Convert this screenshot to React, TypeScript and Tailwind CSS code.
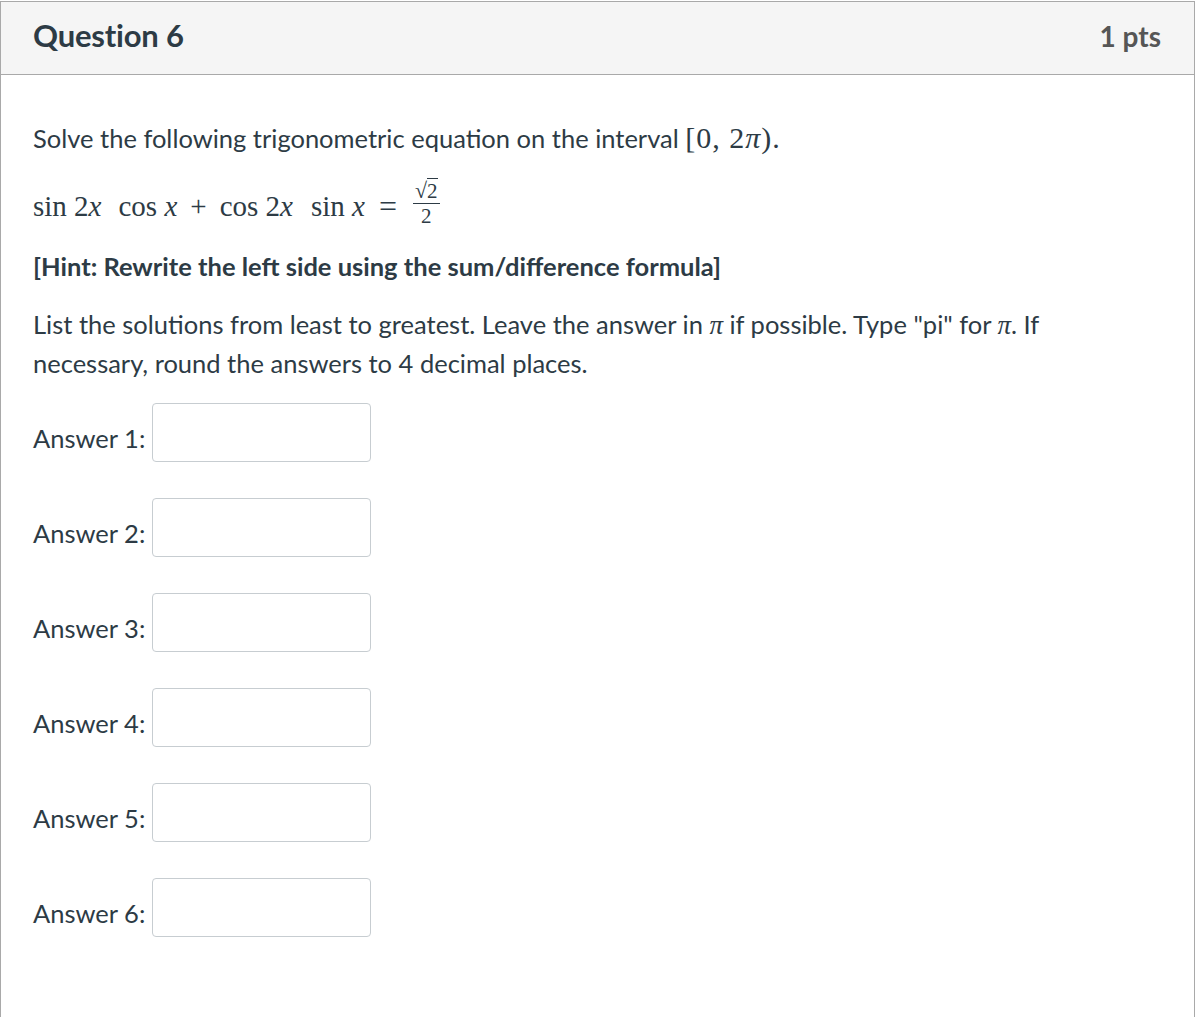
import React from 'react';

const answers = [1, 2, 3, 4, 5, 6];

const MathSerif: React.FC<{ children: React.ReactNode; className?: string }> = ({ children, className }) => (
  <span className={`font-['Liberation_Serif','DejaVu_Serif',serif] ${className ?? ''}`}>{children}</span>
);

const V: React.FC<{ children: React.ReactNode }> = ({ children }) => <i className="italic">{children}</i>;

const App: React.FC = () => {
  return (
    <div className="min-h-[1017px] bg-white pt-px font-['Lato',sans-serif] text-[#2d3b45]">
      <div className="w-[1195px] min-h-[1100px] border border-[#a9a9a9]">
        <header className="flex items-center justify-between h-[73px] bg-[#f5f5f5] border-b border-[#a9a9a9] pl-[32px] pr-[33px]">
          <h2 className="text-[31px] font-bold leading-none tracking-[-0.2px] pb-[5px]">Question 6</h2>
          <span className="text-[28px] font-bold text-[#565656] leading-none pb-[4px]">1 pts</span>
        </header>

        <div className="pl-[32px] pt-[44px] text-[25.5px] leading-[38px]">
          <p>
            Solve the following trigonometric equation on the interval{' '}
            <MathSerif className="text-[30px] tracking-[1px]">
              [0, 2<V>π</V>).
            </MathSerif>
          </p>

          <div className="mt-[25px] h-[48px] flex items-center">
            <MathSerif className="text-[29px] flex items-center whitespace-pre">
              <span>sin 2<V>x</V></span>
              <span className="ml-[17px]">cos <V>x</V></span>
              <span className="mx-[13px]">+</span>
              <span>cos 2<V>x</V></span>
              <span className="ml-[18px]">sin <V>x</V></span>
              <span className="mx-[14px] text-[32px]">=</span>
              <span className="inline-flex flex-col items-center text-[21px] leading-[20px] -mt-[6px] ml-[2px]">
                <span className="px-[2px] border-b border-[#2d3b45] pb-[2px]">
                  <span className="text-[22px]">√</span>
                  <span className="border-t border-[#2d3b45]">2</span>
                </span>
                <span className="pt-[2px]">2</span>
              </span>
            </MathSerif>
          </div>

          <p className="mt-[17px] font-bold">[Hint: Rewrite the left side using the sum/difference formula]</p>

          <p className="mt-[20px] pr-[120px]">
            List the solutions from least to greatest. Leave the answer in{' '}
            <MathSerif className="text-[27px]"><V>π</V></MathSerif> if possible. Type "pi" for{' '}
            <MathSerif className="text-[27px]"><V>π</V></MathSerif>. If necessary, round the answers to 4 decimal places.
          </p>

          <div className="mt-[21px] flex flex-col gap-[36px]">
            {answers.map((n) => (
              <div key={n} className="flex items-center">
                <label className="mr-[7px] pt-[10px]">Answer {n}:</label>
                <input
                  type="text"
                  className="w-[219px] h-[59px] border border-[#c7cdd1] rounded-[4px] bg-white outline-none"
                />
              </div>
            ))}
          </div>
        </div>
      </div>
    </div>
  );
};

export default App;
